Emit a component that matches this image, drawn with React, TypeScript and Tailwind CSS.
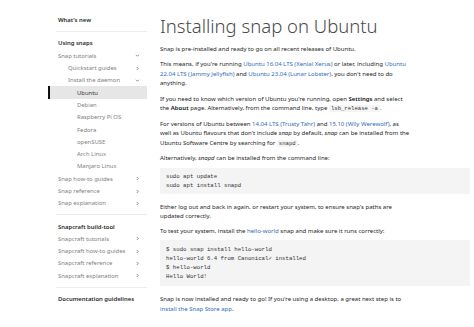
import React from "react";

type NavItem = {
  label: string;
  depth: 0 | 1 | 2;
  chevron?: "down" | "right";
  active?: boolean;
};

const Chevron = ({ dir }: { dir: "down" | "right" }) => (
  <svg width="5" height="5" viewBox="0 0 10 10" className="shrink-0">
    {dir === "down" ? (
      <path d="M2 3.5 L5 6.5 L8 3.5" fill="none" stroke="#555" strokeWidth="1.3" />
    ) : (
      <path d="M3.5 2 L6.5 5 L3.5 8" fill="none" stroke="#555" strokeWidth="1.3" />
    )}
  </svg>
);

const usingSnaps: NavItem[] = [
  { label: "Snap tutorials", depth: 0, chevron: "down" },
  { label: "Quickstart guides", depth: 1, chevron: "right" },
  { label: "Install the daemon", depth: 1, chevron: "down" },
  { label: "Ubuntu", depth: 2, active: true },
  { label: "Debian", depth: 2 },
  { label: "Raspberry Pi OS", depth: 2 },
  { label: "Fedora", depth: 2 },
  { label: "openSUSE", depth: 2 },
  { label: "Arch Linux", depth: 2 },
  { label: "Manjaro Linux", depth: 2 },
  { label: "Snap how-to guides", depth: 0, chevron: "right" },
  { label: "Snap reference", depth: 0, chevron: "right" },
  { label: "Snap explanation", depth: 0, chevron: "right" },
];

const snapcraft: NavItem[] = [
  { label: "Snapcraft tutorials", depth: 0, chevron: "right" },
  { label: "Snapcraft how-to guides", depth: 0, chevron: "right" },
  { label: "Snapcraft reference", depth: 0, chevron: "right" },
  { label: "Snapcraft explanation", depth: 0, chevron: "right" },
];

const NavRow = ({ item }: { item: NavItem }) => {
  const pad = item.depth === 0 ? "pl-[8px]" : item.depth === 1 ? "pl-[18px]" : "pl-[27px]";
  return (
    <div
      className={`flex h-[12.3px] items-center justify-between pr-[7px] ${pad} ${
        item.active ? "border-l-2 border-[#111] bg-[#e6e6e6] text-[#333]" : "border-l-2 border-transparent text-[#808080]"
      }`}
    >
      <span>{item.label}</span>
      {item.chevron && <Chevron dir={item.chevron} />}
    </div>
  );
};

const Heading = ({ children }: { children: React.ReactNode }) => (
  <div className="flex h-[12.3px] items-center pl-[10px] font-semibold text-[#2a2a2a]">{children}</div>
);

const Divider = () => <div className="my-[5px] ml-[8px] h-px bg-[#ececec]" />;

const A = ({ children }: { children: React.ReactNode }) => (
  <span className="text-[#2f6db8]">{children}</span>
);

const Code = ({ children }: { children: React.ReactNode }) => (
  <span className="bg-[#f5f5f5] px-[2px] font-['Liberation_Mono',monospace] text-[5.6px] text-[#333]">{children}</span>
);

export default function App() {
  return (
    <div className="flex h-[327px] w-[474px] overflow-hidden bg-white pl-[48px] pt-[14px] font-['Noto_Sans',sans-serif]">
      {/* Sidebar */}
      <nav className="w-[99px] shrink-0 text-[5.9px] leading-[12px]">
        <Heading>What's new</Heading>
        <Divider />
        <Heading>Using snaps</Heading>
        {usingSnaps.map((item) => (
          <NavRow key={item.label} item={item} />
        ))}
        <Divider />
        <Heading>Snapcraft build-tool</Heading>
        {snapcraft.map((item) => (
          <NavRow key={item.label} item={item} />
        ))}
        <Divider />
        <Heading>Documentation guidelines</Heading>
      </nav>

      {/* Main content */}
      <main className="ml-[13px] flex-1 pr-[4px] text-[6px] leading-[9.5px] text-[#262626]">
        <h1 className="text-[18.5px] font-light leading-[24px] text-[#4a4a4a]">Installing snap on Ubuntu</h1>
        <div className="mt-[6.5px] flex flex-col gap-[6px] whitespace-nowrap">
          <p>Snap is pre-installed and ready to go on all recent releases of Ubuntu.</p>
          <p>
            This means, if you're running <A>Ubuntu 16.04 LTS (Xenial Xerus)</A> or later, including <A>Ubuntu</A>
            <br />
            <A>22.04 LTS (Jammy Jellyfish)</A> and <A>Ubuntu 23.04 (Lunar Lobster)</A>, you don't need to do
            <br />
            anything.
          </p>
          <p>
            If you need to know which version of Ubuntu you're running, open <b className="font-semibold text-[#111]">Settings</b> and select
            <br />
            the <b className="font-semibold text-[#111]">About</b> page. Alternatively, from the command line, type{" "}
            <Code>lsb_release -a</Code>.
          </p>
          <p>
            For versions of Ubuntu between <A>14.04 LTS (Trusty Tahr)</A> and <A>15.10 (Wily Werewolf)</A>, as
            <br />
            well as Ubuntu flavours that don't include <i>snap</i> by default, <i>snap</i> can be installed from the
            <br />
            Ubuntu Software Centre by searching for <Code>snapd</Code>.
          </p>
          <p>
            Alternatively, <i>snapd</i> can be installed from the command line:
          </p>
        </div>
        <pre className="mt-[4px] bg-[#f4f4f4] pb-[3.5px] pl-[6px] pt-[4.5px] font-['Liberation_Mono',monospace] text-[5.7px] leading-[9px] text-[#333]">
          {"sudo apt update\nsudo apt install snapd"}
        </pre>
        <div className="mt-[9px] flex flex-col gap-[5px] whitespace-nowrap">
          <p>
            Either log out and back in again, or restart your system, to ensure snap's paths are
            <br />
            updated correctly.
          </p>
          <p>
            To test your system, install the <A>hello-world</A> snap and make sure it runs correctly:
          </p>
        </div>
        <pre className="mt-[3.5px] bg-[#f4f4f4] pb-[5px] pl-[6px] pt-[5.5px] font-['Liberation_Mono',monospace] text-[5.7px] leading-[9px] text-[#333]">
          {"$ sudo snap install hello-world\nhello-world 6.4 from Canonical\u2713 installed\n$ hello-world\nHello World!"}
        </pre>
        <p className="mt-[9px] whitespace-nowrap">
          Snap is now installed and ready to go! If you're using a desktop, a great next step is to
          <br />
          <A>install the Snap Store app</A>.
        </p>
      </main>
    </div>
  );
}
